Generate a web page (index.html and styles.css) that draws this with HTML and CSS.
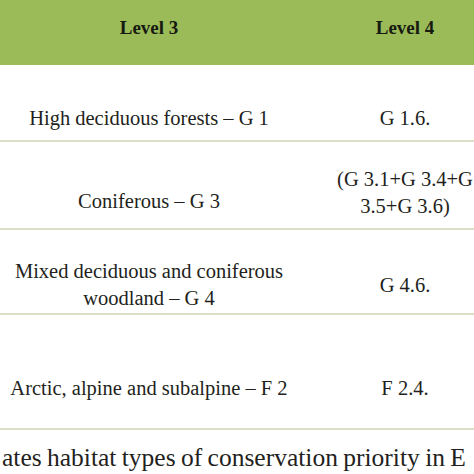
FILE: index.html
```html
<!DOCTYPE html>
<html>
<head>
<meta charset="utf-8">
<link rel="stylesheet" href="styles.css">
</head>
<body>
<div class="page">
  <div class="table">
    <div class="row head">
      <div class="cell">Level 3</div>
      <div class="cell">Level 4</div>
    </div>
    <div class="row r1">
      <div class="cell">High deciduous forests – G 1</div>
      <div class="cell">G 1.6.</div>
    </div>
    <div class="row r2">
      <div class="cell low">Coniferous – G 3</div>
      <div class="cell">(G 3.1+G 3.4+G<br>3.5+G 3.6)</div>
    </div>
    <div class="row r3">
      <div class="cell">Mixed deciduous and coniferous<br>woodland – G 4</div>
      <div class="cell">G 4.6.</div>
    </div>
    <div class="row r4">
      <div class="cell">Arctic, alpine and subalpine – F 2</div>
      <div class="cell">F 2.4.</div>
    </div>
  </div>
  <p class="caption">ates habitat types of conservation priority in E</p>
</div>
</body>
</html>
```
FILE: styles.css
```css
html, body {
  margin: 0;
  padding: 0;
  background: #ffffff;
  overflow: hidden;
}
.page {
  width: 474px;
  height: 474px;
  overflow: hidden;
  font-family: "Liberation Serif", "DejaVu Serif", serif;
  color: #231f20;
}
.table {
  width: 512px;
}
.row {
  display: grid;
  grid-template-columns: 298px 214px;
  align-items: center;
  box-sizing: border-box;
  border-bottom: 2px solid #dcdfc6;
}
.cell {
  text-align: center;
  font-size: 20.5px;
  line-height: 27px;
}
.low {
  padding-top: 17px;
}
.head {
  height: 65px;
  background: #9bbb59;
  border-bottom: none;
  padding-bottom: 10px;
}
.head .cell {
  font-size: 19px;
  font-weight: bold;
  color: #161a10;
}
.r1 { height: 77px; padding-top: 32px; }
.r2 { height: 88px; padding-top: 15px; }
.r3 { height: 85px; padding-top: 27px; }
.r4 { height: 115px; padding-top: 33px; }
.caption {
  margin: 0;
  padding: 12px 0 0 2px;
  font-size: 25.5px;
  line-height: 32px;
  word-spacing: -1px;
  white-space: nowrap;
  color: #231f20;
}
```
